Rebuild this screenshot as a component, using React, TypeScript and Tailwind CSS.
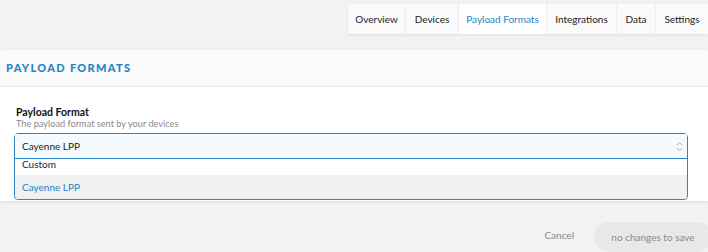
const tabs = [
  { name: "Overview", w: "w-[57px]" },
  { name: "Devices", w: "w-[53px]" },
  { name: "Payload Formats", w: "w-[88px]" },
  { name: "Integrations", w: "w-[70px]" },
  { name: "Data", w: "w-[39px]" },
  { name: "Settings", w: "w-[53px]" },
];

function Chevrons() {
  return (
    <svg viewBox="0 0 8 12" className="h-[11px] w-[7px]" fill="none" stroke="#9aa4ad" strokeWidth="1">
      <polyline points="1,4.5 4,1.5 7,4.5" />
      <polyline points="1,7.5 4,10.5 7,7.5" />
    </svg>
  );
}

export default function App() {
  const active = "Payload Formats";

  return (
    <div className="flex h-[252px] w-[708px] flex-col overflow-hidden bg-[#f2f2f2] font-['Lato',sans-serif] text-[#222]">
      <div className="flex h-[50px] justify-end pt-[4px]">
        <nav className="flex h-[30px] rounded-l-[3px] bg-[#fafafa] text-[10px] shadow-[0_1px_3px_rgba(0,0,0,0.08)]">
          {tabs.map((t, i) => (
            <div
              key={t.name}
              className={
                "flex items-center justify-center " +
                t.w +
                (i > 0 ? " border-l border-[#ececec]" : "") +
                (t.name === active ? " bg-white text-[#1f84c6]" : "")
              }
            >
              {t.name}
            </div>
          ))}
        </nav>
      </div>

      <section className="relative flex h-[151px] flex-col bg-white shadow-[0_1px_4px_rgba(0,0,0,0.1)]">
        <header className="flex h-[37px] items-center border-b border-[#e6e6e6] bg-[#fafafa] px-[6px]">
          <h2 className="text-[11px] font-black tracking-[0.12em] text-[#1f84c6]">PAYLOAD FORMATS</h2>
        </header>

        <div className="px-[14px] pt-[19px]">
          <div className="pl-[2px] text-[10.5px] font-bold leading-[12px] text-[#111]">Payload Format</div>
          <div className="pl-[2px] text-[9.2px] leading-[12px] text-[#8a8a8a]">The payload format sent by your devices</div>

          <div className="mr-[6px] mt-[3px] rounded-[4px] border border-[#2a86c8]">
            <div className="flex h-[25px] items-center justify-between border-b border-[#2a86c8] bg-[#f5faff] pl-[7px] pr-[4px] text-[10px]">
              <span>Cayenne LPP</span>
              <Chevrons />
            </div>
            <div className="flex h-[16px] items-start pl-[7px] text-[10px] leading-[11px]">
              <span>Custom</span>
            </div>
            <div className="flex h-[24px] items-center rounded-b-[4px] bg-[#f0f0f0] pl-[7px] text-[10px] text-[#1f84c6]">
              Cayenne LPP
            </div>
          </div>
        </div>
      </section>

      <footer className="flex flex-1 items-end justify-end gap-[20px]">
        <button className="mb-[9px] text-[10px] text-[#8a8a8a]">Cancel</button>
        <button className="-mr-[4px] h-[30px] w-[118px] rounded-full bg-[#e8e8e8] text-[10px] text-[#8a8a8a]">
          no changes to save
        </button>
      </footer>
    </div>
  );
}
